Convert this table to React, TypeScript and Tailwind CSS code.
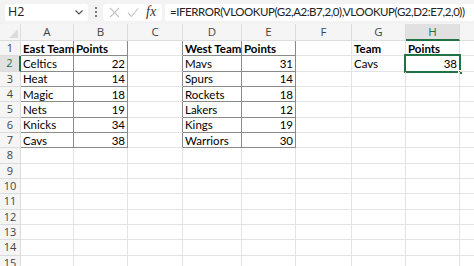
import React from "react";

const COLS = [
  { key: "A", w: 53 },
  { key: "B", w: 54 },
  { key: "C", w: 55 },
  { key: "D", w: 59 },
  { key: "E", w: 54 },
  { key: "F", w: 56 },
  { key: "G", w: 54 },
  { key: "H", w: 54 },
  { key: "I", w: 54 },
];

type Cell = { v: string; bold?: boolean; num?: boolean };

const data: Record<string, Cell> = {
  A1: { v: "East Team", bold: true },
  B1: { v: "Points", bold: true },
  D1: { v: "West Team", bold: true },
  E1: { v: "Points", bold: true },
  G1: { v: "Team", bold: true },
  H1: { v: "Points", bold: true },
  G2: { v: "Cavs" },
  H2: { v: "38", num: true },
};

const east = [["Celtics", "22"], ["Heat", "14"], ["Magic", "18"], ["Nets", "19"], ["Knicks", "34"], ["Cavs", "38"]];
const west = [["Mavs", "31"], ["Spurs", "14"], ["Rockets", "18"], ["Lakers", "12"], ["Kings", "19"], ["Warriors", "30"]];
east.forEach(([t, p], i) => {
  data["A" + (i + 2)] = { v: t };
  data["B" + (i + 2)] = { v: p, num: true };
});
west.forEach(([t, p], i) => {
  data["D" + (i + 2)] = { v: t };
  data["E" + (i + 2)] = { v: p, num: true };
});

function inTable(c: number, r: number) {
  return r >= 1 && r <= 7 && (c === 0 || c === 1 || c === 3 || c === 4);
}

function GridCell({ c, r }: { c: number; r: number }) {
  const col = COLS[c];
  const cell = data[col.key + r];
  const darkRight = inTable(c, r) || inTable(c + 1, r);
  const darkBottom = inTable(c, r) || inTable(c, r + 1);
  const selected = col.key === "H" && r === 2;
  return (
    <div
      className={`relative shrink-0 h-full border-r border-b flex items-center px-[2px] overflow-visible whitespace-nowrap ${
        darkRight ? "border-r-[#8a8a8a]" : "border-r-[#e3e3e3]"
      } ${darkBottom ? "border-b-[#8a8a8a]" : "border-b-[#e3e3e3]"} ${cell?.num ? "justify-end" : "justify-start"} ${
        cell?.bold ? "font-bold" : ""
      }`}
      style={{ width: col.w }}
    >
      {cell?.v}
      {selected && (
        <>
          <div className="absolute left-[-2px] top-[-2px] right-[-2px] bottom-[-2px] border-2 border-[#217346]" />
          <div className="absolute right-[-4px] bottom-[-4px] w-[5px] h-[5px] bg-[#217346] border border-white" />
        </>
      )}
    </div>
  );
}

function TopBar() {
  return (
    <div className="h-[24px] bg-[#f3f3f3] flex items-center shrink-0">
      <div className="ml-[5px] w-[83px] h-[17px] bg-white rounded-[3px] flex items-center justify-between pl-[3px] pr-[4px] text-[12.5px] text-[#222]">
        <span>H2</span>
        <svg width="10" height="10" viewBox="0 0 10 10">
          <path d="M1.5 3.5 L5 7 L8.5 3.5" stroke="#555" strokeWidth="1.2" fill="none" />
        </svg>
      </div>
      <div className="w-[15px] flex flex-col items-center gap-[2px]">
        <div className="w-[2px] h-[2px] bg-[#555] rounded-full" />
        <div className="w-[2px] h-[2px] bg-[#555] rounded-full" />
        <div className="w-[2px] h-[2px] bg-[#555] rounded-full" />
      </div>
      <div className="w-[59px] h-[17px] bg-white rounded-[3px] flex items-center gap-[7px] pl-[6px]">
        <svg width="11" height="11" viewBox="0 0 11 11">
          <path d="M1 1 L10 10 M10 1 L1 10" stroke="#c4c4c4" strokeWidth="1.1" fill="none" />
        </svg>
        <svg width="12" height="11" viewBox="0 0 12 11">
          <path d="M1 6 L4.5 9.5 L11 1.5" stroke="#c4c4c4" strokeWidth="1.1" fill="none" />
        </svg>
        <span className="font-['Liberation_Serif',serif] italic text-[14px] text-[#333] leading-none">fx</span>
      </div>
      <div className="ml-[3px] flex-1 h-[17px] bg-white rounded-l-[3px] flex items-center pl-[5px] font-['Lato',sans-serif] text-[11.5px] tracking-[-0.45px] text-[#222] whitespace-nowrap overflow-hidden">
        =IFERROR(VLOOKUP(G2,A2:B7,2,0),VLOOKUP(G2,D2:E7,2,0))
      </div>
    </div>
  );
}

export default function App() {
  const rows = Array.from({ length: 15 }, (_, i) => i + 1);
  return (
    <div className="w-[474px] h-[266px] overflow-hidden bg-white flex flex-col font-['Open_Sans',sans-serif]">
      <TopBar />
      <div className="h-[17px] flex shrink-0 bg-[#f5f5f5] text-[11.5px] text-[#444]">
        <div className="w-[21px] shrink-0 h-full relative border-r border-b border-[#dcdcdc]">
          <svg className="absolute right-[2px] bottom-[2px]" width="9" height="9" viewBox="0 0 9 9">
            <path d="M9 0 L9 9 L0 9 Z" fill="#dcdcdc" />
          </svg>
        </div>
        {COLS.map((c) => (
          <div
            key={c.key}
            className={`shrink-0 h-full flex items-center justify-center border-r ${
              c.key === "H" ? "bg-[#e1e1e1] border-b-2 border-b-[#217346] text-[#217346] border-r-[#dcdcdc]" : "border-b border-[#dcdcdc]"
            }`}
            style={{ width: c.w }}
          >
            {c.key === "I" ? "" : c.key}
          </div>
        ))}
      </div>
      <div className="flex flex-col font-['Lato',sans-serif] text-[11.5px] text-black">
        {rows.map((r) => (
          <div key={r} className="h-[15.33px] flex shrink-0">
            <div
              className={`w-[21px] shrink-0 h-full flex items-center justify-center border-r border-b border-[#dcdcdc] font-['Open_Sans',sans-serif] text-[11px] ${
                r === 2 ? "bg-[#e1e1e1] text-[#217346] border-r-2 border-r-[#217346]" : "bg-[#f5f5f5] text-[#444]"
              }`}
            >
              {r}
            </div>
            {COLS.map((c, ci) => (
              <GridCell key={c.key} c={ci} r={r} />
            ))}
          </div>
        ))}
      </div>
    </div>
  );
}
